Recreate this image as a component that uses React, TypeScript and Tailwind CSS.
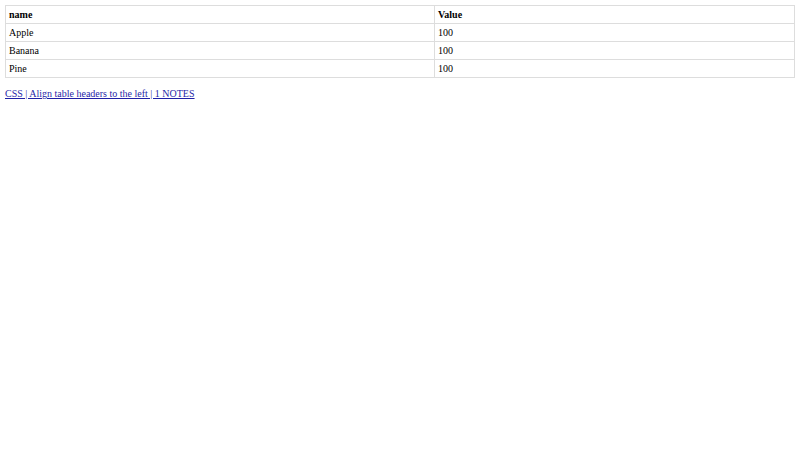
const rows = [
  { name: 'Apple', value: '100' },
  { name: 'Banana', value: '100' },
  { name: 'Pine', value: '100' },
];

export default function App() {
  return (
    <div className="p-[5px] font-['Liberation_Serif',serif] text-[10px] leading-[14px] text-black bg-white min-h-screen">
      <table className="w-full border-collapse border border-[#dddddd]">
        <thead>
          <tr>
            <th className="w-[429px] border border-[#dddddd] px-[3px] h-[18px] text-left font-bold">name</th>
            <th className="border border-[#dddddd] px-[3px] h-[18px] text-left font-bold">Value</th>
          </tr>
        </thead>
        <tbody>
          {rows.map((r) => (
            <tr key={r.name}>
              <td className="border border-[#dddddd] px-[3px] h-[18px]">{r.name}</td>
              <td className="border border-[#dddddd] px-[3px] h-[18px]">{r.value}</td>
            </tr>
          ))}
        </tbody>
      </table>
      <p className="mt-[9px]">
        <a href="#" className="text-[#1f1fa8] underline">
          CSS | Align table headers to the left | 1 NOTES
        </a>
      </p>
    </div>
  );
}
